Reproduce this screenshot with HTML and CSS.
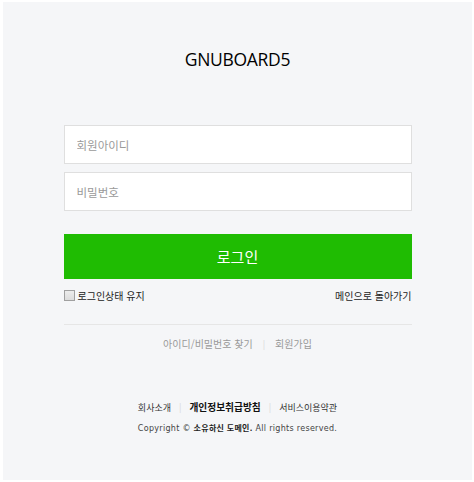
FILE: index.html
```html
<!DOCTYPE html>
<html lang="ko">
<head>
<meta charset="utf-8">
<title>로그인</title>
<link rel="stylesheet" href="styles.css">
</head>
<body>
<div class="wrap">
  <div class="login">
    <h1 class="logo">GNUBOARD5</h1>
    <form class="form">
      <input class="field" type="text" placeholder="회원아이디">
      <input class="field" type="password" placeholder="비밀번호">
      <button class="btn" type="button">로그인</button>
      <div class="opts">
        <label class="keep"><span class="chk"></span>로그인상태 유지</label>
        <a class="home" href="#">메인으로 돌아가기</a>
      </div>
    </form>
    <div class="find">
      <a href="#">아이디/비밀번호 찾기</a><span class="sep">|</span><a href="#">회원가입</a>
    </div>
  </div>
  <div class="footer">
    <div class="flinks">
      <a href="#">회사소개</a><span class="sep">|</span><a href="#" class="b">개인정보취급방침</a><span class="sep">|</span><a href="#">서비스이용약관</a>
    </div>
    <p class="copy">Copyright &copy; <b>소유하신 도메인.</b> All rights reserved.</p>
  </div>
</div>
</body>
</html>
```

FILE: styles.css
```css
html, body {
  margin: 0;
  padding: 0;
  background: #ffffff;
}
body {
  padding: 2px 2px 2px 3px;
  font-family: "Noto Sans CJK KR", "Noto Sans", sans-serif;
}
.wrap {
  background: #f5f6f8;
  height: 478px;
  overflow: hidden;
}
.login {
  width: 348px;
  margin: 0 auto;
}
.logo {
  margin: 0;
  padding-top: 44px;
  height: 26px;
  line-height: 26px;
  text-align: center;
  font-family: "Open Sans", sans-serif;
  font-weight: 500;
  font-size: 17.5px;
  color: #000;
  letter-spacing: -0.3px;
}
.form {
  margin-top: 53px;
  display: flex;
  flex-direction: column;
}
.field {
  box-sizing: border-box;
  height: 39px;
  margin: 0 0 8px;
  border: 1px solid #dfdfdf;
  background: #fff;
  padding: 0 12px;
  font-family: inherit;
  font-size: 11.5px;
  color: #333;
  outline: none;
}
.field::placeholder {
  color: #9a9a9a;
}
.btn {
  margin-top: 15px;
  height: 45px;
  border: 0;
  background: #1fbc02;
  color: #fff;
  font-family: inherit;
  font-size: 15px;
  cursor: pointer;
}
.opts {
  display: flex;
  justify-content: space-between;
  align-items: center;
  margin-top: 9px;
  height: 14px;
  font-size: 10px;
  color: #222;
}
.keep {
  display: flex;
  align-items: center;
  gap: 3px;
}
.chk {
  box-sizing: border-box;
  width: 11px;
  height: 11px;
  border: 1px solid #a0a0a0;
  background: linear-gradient(#ececec, #dcdcdc);
}
.home {
  color: #222;
  text-decoration: none;
}
.find {
  margin-top: 22px;
  border-top: 1px solid #e6e6e6;
  padding-top: 11px;
  text-align: center;
  font-size: 10px;
  color: #999;
}
.find a {
  color: #999;
  text-decoration: none;
}
.find .sep {
  margin: 0 10px;
}
.sep {
  color: #d8d8d8;
  margin: 0 8px;
  font-size: 9px;
}
.footer {
  margin-top: 49px;
  text-align: center;
}
.flinks {
  font-size: 9px;
  color: #333;
}
.flinks a {
  color: #333;
  text-decoration: none;
}
.flinks a.b {
  font-weight: 700;
  font-size: 9.7px;
  color: #111;
}
.copy {
  margin: 8px 0 0;
  font-family: "DejaVu Sans", sans-serif;
  font-size: 8px;
  color: #444;
  letter-spacing: 0.3px;
}
.copy b {
  font-family: "Noto Sans CJK KR", sans-serif;
  color: #222;
}
```
